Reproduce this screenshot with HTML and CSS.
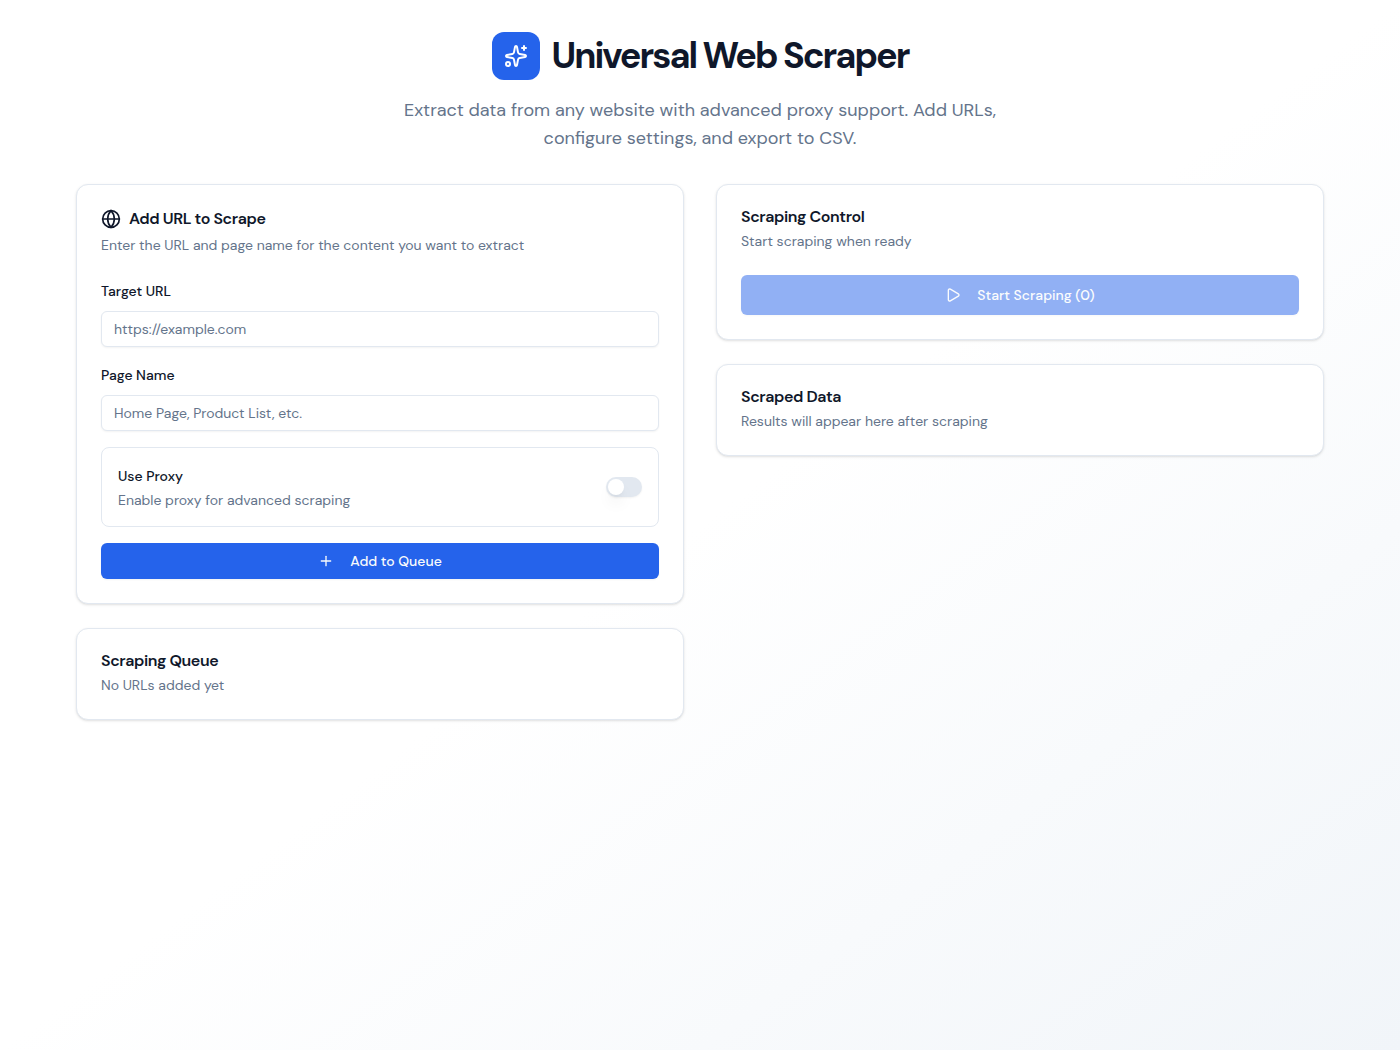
FILE: index.html
```html
<!DOCTYPE html>
<html lang="en">
<head>
  <meta charset="UTF-8">
  <meta name="viewport" content="width=device-width, initial-scale=1.0">
  <title>Universal Web Scraper</title>
  <link rel="stylesheet" href="styles.css">
</head>
<body>
  <div class="container">
    <header class="page-header">
      <div class="brand">
        <div class="logo">
          <svg width="24" height="24" viewBox="0 0 24 24" fill="none" stroke="currentColor" stroke-width="2" stroke-linecap="round" stroke-linejoin="round" aria-hidden="true">
            <path d="M11.017 2.814a1 1 0 0 1 1.966 0l1.051 5.558a2 2 0 0 0 1.594 1.594l5.558 1.051a1 1 0 0 1 0 1.966l-5.558 1.051a2 2 0 0 0-1.594 1.594l-1.051 5.558a1 1 0 0 1-1.966 0l-1.051-5.558a2 2 0 0 0-1.594-1.594l-5.558-1.051a1 1 0 0 1 0-1.966l5.558-1.051a2 2 0 0 0 1.594-1.594z"/>
            <path d="M20 2v4"/>
            <path d="M22 4h-4"/>
            <circle cx="4" cy="20" r="2"/>
          </svg>
        </div>
        <h1>Universal Web Scraper</h1>
      </div>
      <p class="subtitle">Extract data from any website with advanced proxy support. Add URLs, configure settings, and export to CSV.</p>
    </header>

    <main class="columns">
      <div class="column">
        <section class="card">
          <div class="card-header">
            <h2 class="with-icon">
              <svg width="20" height="20" viewBox="0 0 24 24" fill="none" stroke="currentColor" stroke-width="2" stroke-linecap="round" stroke-linejoin="round" aria-hidden="true">
                <circle cx="12" cy="12" r="10"/>
                <path d="M12 2a14.5 14.5 0 0 0 0 20 14.5 14.5 0 0 0 0-20"/>
                <path d="M2 12h20"/>
              </svg>
              Add URL to Scrape
            </h2>
            <p>Enter the URL and page name for the content you want to extract</p>
          </div>
          <form class="url-form">
            <div class="field">
              <label for="url">Target URL</label>
              <input type="url" id="url" placeholder="https://example.com">
            </div>
            <div class="field">
              <label for="pageName">Page Name</label>
              <input type="text" id="pageName" placeholder="Home Page, Product List, etc.">
            </div>
            <div class="proxy-box">
              <div class="proxy-text">
                <label for="useProxy">Use Proxy</label>
                <p>Enable proxy for advanced scraping</p>
              </div>
              <input type="checkbox" role="switch" id="useProxy" class="switch">
            </div>
            <button type="button" class="btn">
              <svg width="16" height="16" viewBox="0 0 24 24" fill="none" stroke="currentColor" stroke-width="2" stroke-linecap="round" stroke-linejoin="round" aria-hidden="true">
                <path d="M5 12h14"/>
                <path d="M12 5v14"/>
              </svg>
              Add to Queue
            </button>
          </form>
        </section>

        <section class="card">
          <div class="card-header">
            <h2>Scraping Queue</h2>
            <p>No URLs added yet</p>
          </div>
        </section>
      </div>

      <div class="column">
        <section class="card">
          <div class="card-header">
            <h2>Scraping Control</h2>
            <p>Start scraping when ready</p>
          </div>
          <button type="button" class="btn btn-large" disabled>
            <svg width="16" height="16" viewBox="0 0 24 24" fill="none" stroke="currentColor" stroke-width="2" stroke-linecap="round" stroke-linejoin="round" aria-hidden="true">
              <path d="M5 5a2 2 0 0 1 3.008-1.728l11.997 6.998a2 2 0 0 1 .003 3.458l-12 7A2 2 0 0 1 5 19z"/>
            </svg>
            Start Scraping (0)
          </button>
        </section>

        <section class="card">
          <div class="card-header">
            <h2>Scraped Data</h2>
            <p>Results will appear here after scraping</p>
          </div>
        </section>
      </div>
    </main>
  </div>
</body>
</html>
```
FILE: styles.css
```css
* {
  box-sizing: border-box;
}

/* General Styles */
body {
  margin: 0;
  min-height: 100vh;
  font-family: "DM Sans", Inter, sans-serif;
  font-size: 14px;
  line-height: 20px;
  color: #0f172a;
  background: linear-gradient(to bottom right, #fff, #fff 50%, #f1f5f9);
}

h1, h2, p {
  margin: 0;
}

.container {
  max-width: 1280px;
  margin: 0 auto;
  padding: 32px 16px;
}

/* Header */
.page-header {
  margin-bottom: 32px;
  text-align: center;
}

.brand {
  display: flex;
  align-items: center;
  justify-content: center;
  gap: 12px;
  margin-bottom: 16px;
}

.logo {
  display: flex;
  padding: 12px;
  border-radius: 12px;
  background: #2563eb;
  color: #fff;
}

h1 {
  font-size: 36px;
  font-weight: 700;
  line-height: 40px;
  letter-spacing: -2px;
}

.subtitle {
  max-width: 672px;
  margin: 0 auto;
  font-size: 18px;
  line-height: 28px;
  color: #64748b;
}

/* Cards */
.columns {
  display: grid;
  grid-template-columns: 1fr 1fr;
  gap: 32px;
}

.column {
  display: flex;
  flex-direction: column;
  gap: 24px;
}

.card {
  display: flex;
  flex-direction: column;
  gap: 24px;
  padding: 24px;
  border: 1px solid #e2e8f0;
  border-radius: 12px;
  background: #fff;
  box-shadow: 0 1px 3px rgba(0, 0, 0, 0.1), 0 1px 2px -1px rgba(0, 0, 0, 0.1);
}

.card-header {
  display: flex;
  flex-direction: column;
  gap: 6px;
}

.card-header p,
.proxy-text p {
  color: #64748b;
}

h2 {
  font-size: 16px;
  font-weight: 600;
  line-height: 16px;
  letter-spacing: -0.025em;
}

.with-icon {
  display: flex;
  align-items: center;
  gap: 8px;
}

/* Form */
.url-form {
  display: flex;
  flex-direction: column;
  gap: 16px;
}

.field {
  display: flex;
  flex-direction: column;
  gap: 8px;
}

label {
  font-weight: 500;
  line-height: 24px;
}

.field input {
  width: 100%;
  height: 36px;
  padding: 4px 12px;
  border: 1px solid #e2e8f0;
  border-radius: 6px;
  background: #fff;
  font: inherit;
  color: inherit;
  box-shadow: 0 1px 2px rgba(0, 0, 0, 0.05);
}

.field input::placeholder {
  color: #64748b;
}

.proxy-box {
  display: flex;
  align-items: center;
  justify-content: space-between;
  padding: 16px;
  border: 1px solid #e2e8f0;
  border-radius: 8px;
}

.proxy-text {
  display: flex;
  flex-direction: column;
  gap: 2px;
}

.switch {
  appearance: none;
  width: 36px;
  height: 20px;
  margin: 0;
  padding: 2px;
  border-radius: 10px;
  background: #e2e8f0;
  box-shadow: 0 1px 2px rgba(0, 0, 0, 0.05);
  cursor: pointer;
}

.switch::before {
  content: "";
  display: block;
  width: 16px;
  height: 16px;
  border-radius: 50%;
  background: #fff;
  box-shadow: 0 10px 15px -3px rgba(0, 0, 0, 0.1), 0 4px 6px -4px rgba(0, 0, 0, 0.1);
}

.switch:checked {
  background: #2563eb;
}

.switch:checked::before {
  margin-left: 16px;
}

/* Buttons */
.btn {
  display: flex;
  align-items: center;
  justify-content: center;
  gap: 16px;
  width: 100%;
  height: 36px;
  border: none;
  border-radius: 6px;
  background: #2563eb;
  color: #f8fafc;
  font: inherit;
  font-weight: 500;
  box-shadow: 0 1px 2px rgba(0, 0, 0, 0.05);
  cursor: pointer;
}

.btn-large {
  height: 40px;
}

.btn:disabled {
  opacity: 0.5;
  cursor: not-allowed;
}

@media (max-width: 1023px) {
  .columns {
    grid-template-columns: 1fr;
  }
}
```
